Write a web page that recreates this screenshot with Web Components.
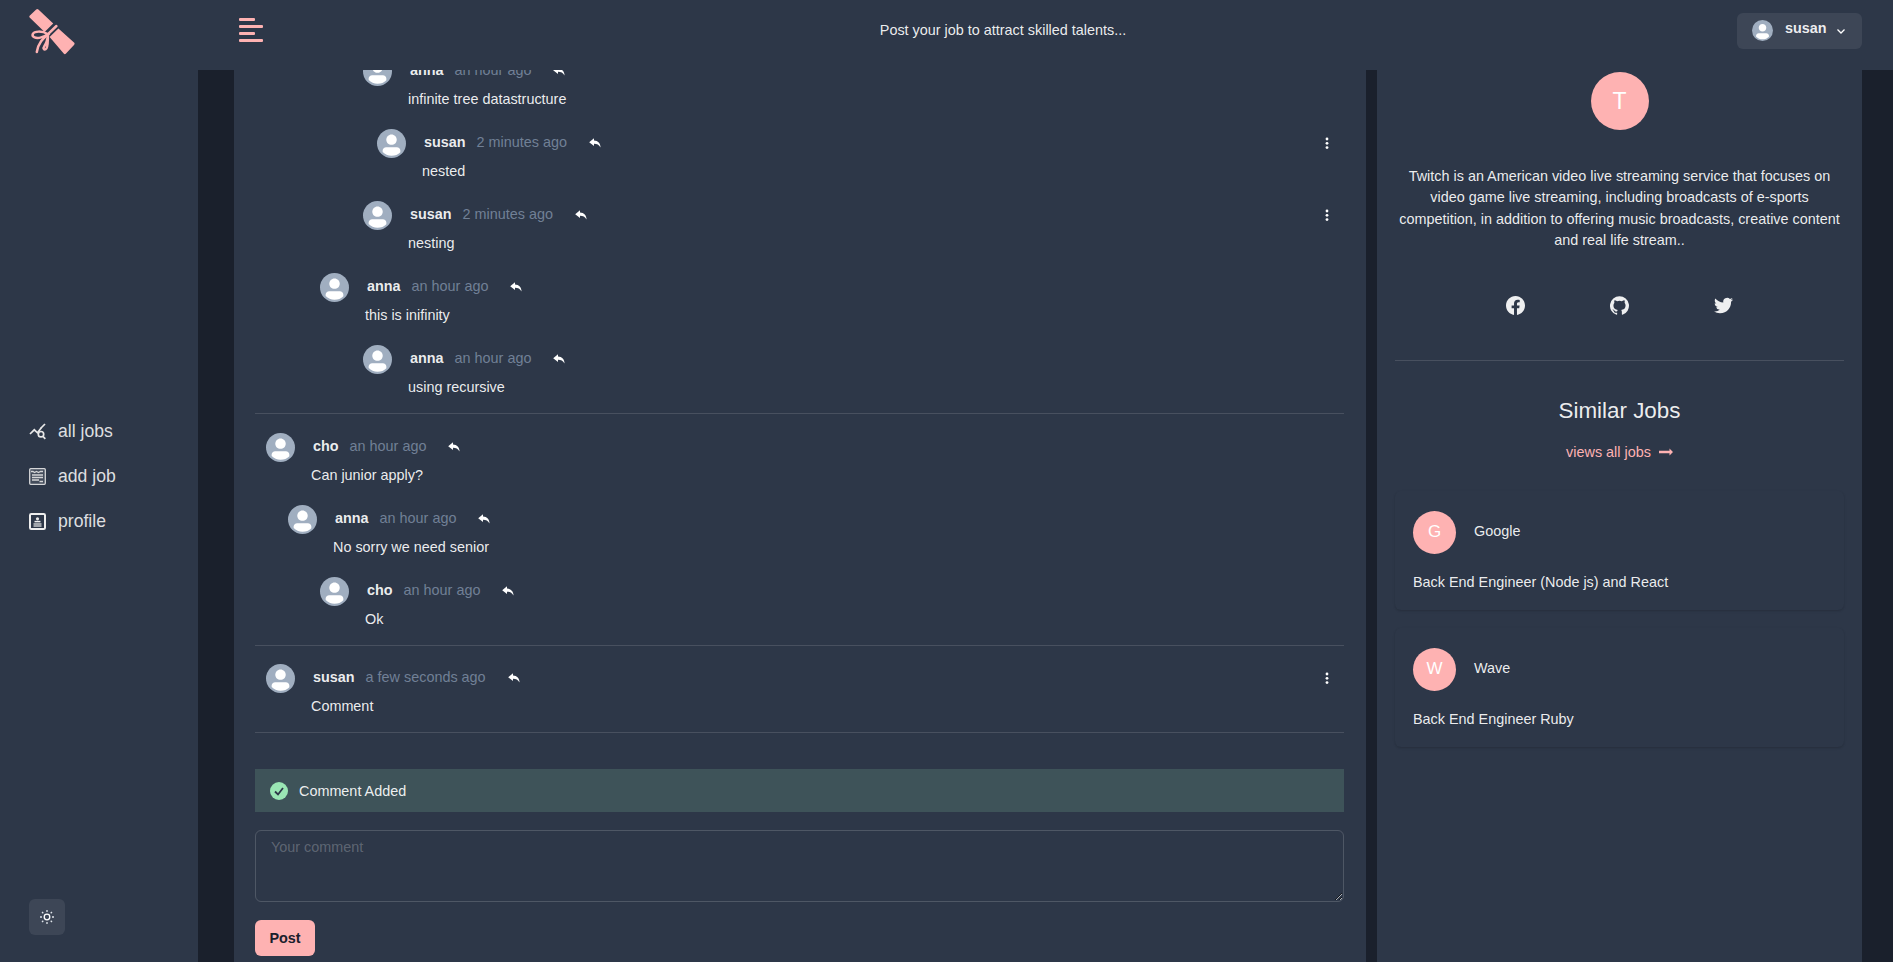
<!DOCTYPE html>
<html>
<head>
<meta charset="utf-8">
<title>Jobs</title>
<style>
  html, body { margin: 0; height: 100%; overflow: hidden; background: #1a202c; }
  body { font-family: "Liberation Sans", Arial, sans-serif; color: rgba(255,255,255,.92); }
</style>
</head>
<body>
<job-app>
  <app-header slot="header"></app-header>
  <app-sidebar slot="sidebar"></app-sidebar>
  <comment-panel slot="main">
    <comment-row name="anna" time="an hour ago" text="infinite tree datastructure" indent="97"></comment-row>
    <comment-row name="susan" time="2 minutes ago" text="nested" indent="111" menu></comment-row>
    <comment-row name="susan" time="2 minutes ago" text="nesting" indent="97" menu></comment-row>
    <comment-row name="anna" time="an hour ago" text="this is inifinity" indent="54"></comment-row>
    <comment-row name="anna" time="an hour ago" text="using recursive" indent="97" divider></comment-row>
    <comment-row name="cho" time="an hour ago" text="Can junior apply?" indent="0" top="18"></comment-row>
    <comment-row name="anna" time="an hour ago" text="No sorry we need senior" indent="22"></comment-row>
    <comment-row name="cho" time="an hour ago" text="Ok" indent="54" divider></comment-row>
    <comment-row name="susan" time="a few seconds ago" text="Comment" indent="0" top="17" menu divider></comment-row>
    <comment-form></comment-form>
  </comment-panel>
  <job-aside slot="aside">
    <job-card letter="G" company="Google" title="Back End Engineer (Node js) and React"></job-card>
    <job-card letter="W" company="Wave" title="Back End Engineer Ruby"></job-card>
  </job-aside>
</job-app>

<script>
const AVATAR = `<svg viewBox="0 0 128 128" width="100%" height="100%" style="display:block"><path fill="#fff" d="M103,102.1388 C93.094,111.92 79.3504,118 64.1638,118 C48.8056,118 34.9294,111.768 25,101.7892 L25,95.2 C25,86.8096 31.981,80 40.6,80 L87.4,80 C96.019,80 103,86.8096 103,95.2 L103,102.1388 Z"/><path fill="#fff" d="M63.9961647,24 C51.2938136,24 41,34.2938136 41,46.9961647 C41,59.7061864 51.2938136,70 63.9961647,70 C76.6985159,70 87,59.7061864 87,46.9961647 C87,34.2938136 76.6985159,24 63.9961647,24"/></svg>`;

class JobApp extends HTMLElement {
  constructor() {
    super();
    this.attachShadow({ mode: "open" });
    this.shadowRoot.innerHTML = `
      <style>
        :host { display: grid; grid-template-columns: 198px 36px 1132px 11px 485px 31px; grid-template-rows: 70px 892px; height: 962px; overflow: hidden; background: #1a202c; }
        .header { grid-column: 1 / -1; position: relative; z-index: 5; }
        .side { grid-column: 1; }
        .main { grid-column: 3; min-height: 0; overflow: hidden; }
        .aside { grid-column: 5; min-height: 0; overflow: hidden; }
      </style>
      <div class="header"><slot name="header"></slot></div>
      <div class="side"><slot name="sidebar"></slot></div>
      <div class="main"><slot name="main"></slot></div>
      <div class="aside"><slot name="aside"></slot></div>
    `;
  }
}

class AppHeader extends HTMLElement {
  constructor() {
    super();
    this.attachShadow({ mode: "open" });
    this.shadowRoot.innerHTML = `
      <style>
        :host { display: block; }
        * { box-sizing: border-box; }
        header { height: 70px; background: #2d3748; display: flex; align-items: center; padding: 0 31px 10px 0; }
        .logo { width: 239px; padding-left: 29px; display: flex; }
        .logo svg { display: block; margin-top: 4px; }
        .burger { display: flex; flex-direction: column; gap: 3.4px; width: 24px; }
        .burger i { display: block; height: 3.500px; background: #feb2b2; border-radius: 1px; width: 24px; }
        .burger i:nth-child(odd) { width: 16px; }
        .tag { flex: 1; text-align: center; font-size: 14.4px; padding-left: 6px; color: rgba(255,255,255,.92); }
        .user { width: 125px; height: 36px; margin-top: 2px; padding: 0 0 1px 15px; background: rgba(255,255,255,.08); border-radius: 6px; display: flex; align-items: center; font-size: 14.4px; font-weight: 700; }
        .av { width: 21px; height: 21px; border-radius: 50%; background: #a0aec0; overflow: hidden; flex: none; }
        .name { margin-left: 12px; margin-top: -5px; }
        .chev { margin-left: 8px; display: block; }
      </style>
      <header>
        <div class="logo">
          <svg width="46" height="46" viewBox="0 0 46 46" fill="#feb2b2">
            <path d="M9.4 .6 24.2 14.6 15.6 23 .9 8.8a1.6 1.6 0 0 1 0-2.3L7.2.6a1.6 1.6 0 0 1 2.2 0Z"/>
            <path d="M29.4 19.6 45 33.6a1.6 1.6 0 0 1 0 2.3L37 44.6a1.6 1.6 0 0 1-2.3 0L20.6 28Z"/>
            <g fill="none" stroke="#feb2b2" stroke-width="2.500" stroke-linecap="round">
              <path d="M27.4 17 19 25.2"/>
              <path d="M19 25.2C13 21.6 5.2 22 3.8 25c-1.200 3 3 5 8.400 3.400 2.800-.8 5-2 6.800-3.200Z"/>
              <path d="M18.800 25.400C14.600 29 9.200 33.400 7.800 43"/>
              <path d="M19 25.400c-.4 4.800-2 9.600-3.800 12-1.500 2-.2 3.600 1.600 2.800 2.400-1 1.800-8 2.200-14.800Z"/>
            </g>
          </svg>
        </div>
        <div class="burger"><i></i><i></i><i></i><i></i></div>
        <div class="tag">Post your job to attract skilled talents...</div>
        <div class="user">
          <div class="av">${AVATAR}</div>
          <span class="name">susan</span>
          <svg class="chev" width="12" height="12" viewBox="0 0 24 24" fill="none" stroke="#fff" stroke-width="2.600"><path d="M5 9l7 7 7-7"/></svg>
        </div>
      </header>
    `;
  }
}

class AppSidebar extends HTMLElement {
  constructor() {
    super();
    this.attachShadow({ mode: "open" });
    const s = "#e8e8e8";
    this.shadowRoot.innerHTML = `
      <style>
        :host { display: block; height: 892px; background: #2d3748; }
        * { box-sizing: border-box; }
        .wrap { height: 100%; display: flex; flex-direction: column; padding: 0 0 27px 29px; }
        nav { display: flex; flex-direction: column; gap: 25px; margin-top: 351px; font-size: 17.6px; color: rgba(255,255,255,.85); }
        a { display: flex; align-items: center; gap: 12px; height: 20px; }
        a svg { width: 17px; height: 17px; flex: none; display: block; }
        .toggle { margin-top: auto; width: 36px; height: 36px; border-radius: 6px; background: rgba(255,255,255,.08); display: flex; align-items: center; justify-content: center; }
      </style>
      <div class="wrap">
        <nav>
          <a><svg viewBox="0 0 17 17" fill="none" stroke="${s}" stroke-width="1.700"><path d="M1 11 5.300 6.800 8.500 9.800 12.500 4.500"/><path d="M12 5 16 1"/><circle cx="12" cy="11.200" r="2.700"/><path d="M14 13.400 16.300 15.800"/></svg>all jobs</a>
          <a><svg viewBox="0 0 17 17" fill="rgba(255,255,255,.12)" stroke="${s}" stroke-width="1.300" opacity=".9"><rect x=".7" y=".7" width="15.600" height="15.600" rx="1"/><path fill="none" d="M2 3.500h2l1.500 1 2-1 2 1 2-1h2.500M3 7h11M3 9.500h11" /><path fill="none" d="M3 12h7M10.500 13.500h3.500" stroke-width="1.500"/></svg>add job</a>
          <a><svg viewBox="0 0 17 17" fill="none" stroke="#eeeeee" stroke-width="2"><rect x="1" y="1" width="15" height="15" rx="1.300"/><circle cx="8.500" cy="5.800" r="1.600" fill="${s}" stroke="none"/><path d="M5.500 8.600h6" stroke-width="1.500"/><path d="M4.500 11h8M4.500 13h8" stroke-width="1.300" opacity=".8"/></svg>profile</a>
        </nav>
        <div class="toggle">
          <svg width="14" height="14" viewBox="0 0 14 14" fill="none" stroke="#fff" stroke-width="1.300"><circle cx="7" cy="7" r="2.800"/><path d="M7 0v2M7 12v2M0 7h2M12 7h2M2 2l1.300 1.300M10.700 10.700 12 12M2 12l1.300-1.300M10.700 3.300 12 2" stroke="#dfe4ea"/></svg>
        </div>
      </div>
    `;
  }
}

class CommentPanel extends HTMLElement {
  constructor() {
    super();
    this.attachShadow({ mode: "open" });
    this.shadowRoot.innerHTML = `
      <style>
        :host { display: block; height: 892px; background: #2d3748; overflow: hidden; }
        .inner { padding: 0 22px 0 21px; margin-top: -14px; }
      </style>
      <div class="inner"><slot></slot></div>
    `;
  }
}

class CommentRow extends HTMLElement {
  constructor() {
    super();
    this.attachShadow({ mode: "open" });
  }
  connectedCallback() {
    const g = (k) => this.getAttribute(k);
    const indent = Number(g("indent")) + 11;
    const menu = this.hasAttribute("menu");
    const topPad = Number(g("top") || 0);
    const h = (this.hasAttribute("divider") ? 69 : 72) + topPad;
    this.shadowRoot.innerHTML = `
      <style>
        :host { display: block; }
        * { box-sizing: border-box; }
        .box { padding: ${topPad}px 15px 0 ${indent}px; height: ${h}px; }
        .line { display: flex; align-items: center; height: 30px; }
        .av { width: 29px; height: 29px; border-radius: 50%; background: #a0aec0; overflow: hidden; flex: none; }
        .name { margin: -2px 0 0 18px; font-size: 14.4px; font-weight: 700; }
        .time { margin: -2px 0 0 11px; font-size: 14.4px; color: #718096; }
        .reply { margin-left: 22px; display: block; }
        .menu { margin-left: auto; display: block; }
        .text { font-size: 14.4px; line-height: 21.6px; margin: 3px 0 0 45px; }
        .rule { height: 1px; background: rgba(255,255,255,.13); }
      </style>
      <div class="box">
        <div class="line">
          <div class="av">${AVATAR}</div>
          <span class="name">${g("name")}</span>
          <span class="time">${g("time")}</span>
          <svg class="reply" width="12" height="10" viewBox="0 0 12 10" fill="#fff"><path d="M5 .3.2 4.200 5 8.100V5.700c3 0 5 1 6.500 3.800C11.600 5.500 9 2.800 5 2.600Z"/></svg>
          ${menu ? `<svg class="menu" width="4" height="13" viewBox="0 0 4 13" fill="#fff"><circle cx="2" cy="2" r="1.400"/><circle cx="2" cy="6.300" r="1.400"/><circle cx="2" cy="10.600" r="1.400"/></svg>` : ""}
        </div>
        <div class="text">${g("text")}</div>
      </div>
      ${this.hasAttribute("divider") ? '<div class="rule"></div>' : ""}
    `;
  }
}

class CommentForm extends HTMLElement {
  constructor() {
    super();
    this.attachShadow({ mode: "open" });
    this.shadowRoot.innerHTML = `
      <style>
        :host { display: block; padding-top: 36px; }
        * { box-sizing: border-box; }
        .alert { height: 43px; background: rgba(154,230,180,.16); display: flex; align-items: center; padding-left: 15px; gap: 11px; font-size: 14.4px; }
        .alert svg { display: block; }
        textarea { display: block; width: 100%; height: 72px; margin-top: 18px; background: transparent; border: 1px solid rgba(255,255,255,.16); border-radius: 6px; padding: 8px 15px; font: 14.4px "Liberation Sans", Arial, sans-serif; color: #fff; outline: 0; resize: vertical; }
        textarea::placeholder { color: rgba(255,255,255,.24); opacity: 1; }
        button { display: block; margin-top: 18px; width: 60px; height: 36px; border: 0; border-radius: 6px; background: #feb2b2; color: #1a202c; font: 700 14.4px "Liberation Sans", Arial, sans-serif; padding: 0; }
      </style>
      <div class="alert">
        <svg width="18" height="18" viewBox="0 0 18 18"><circle cx="9" cy="9" r="9" fill="#9ae6b4"/><path d="M5 9.500 8 12.500 13 6" fill="none" stroke="#2d3748" stroke-width="1.800"/></svg>
        <span>Comment Added</span>
      </div>
      <textarea placeholder="Your comment"></textarea>
      <button type="button">Post</button>
    `;
  }
}

class JobAside extends HTMLElement {
  constructor() {
    super();
    this.attachShadow({ mode: "open" });
    this.shadowRoot.innerHTML = `
      <style>
        :host { display: block; height: 892px; background: #2d3748; overflow: hidden; }
        * { box-sizing: border-box; }
        .wrap { padding: 2px 18px 0; }
        .logo { width: 58px; height: 58px; margin: 0 auto; border-radius: 50%; background: #feb2b2; color: #fff; display: flex; align-items: center; justify-content: center; font-size: 23px; }
        p { margin: 36px 0 0; text-align: center; font-size: 14.4px; line-height: 21.4px; }
        .social { display: flex; justify-content: center; gap: 85px; margin-top: 44px; height: 20px; align-items: center; }
        .social svg { width: 19px; height: 19px; display: block; fill: rgba(255,255,255,.92); }
        hr { border: 0; height: 1px; background: rgba(255,255,255,.13); margin: 44px 0 0; }
        h2 { margin: 35px 0 0; text-align: center; font-size: 22.4px; line-height: 29px; font-weight: 400; }
        .all { display: flex; justify-content: center; align-items: center; gap: 8px; margin-top: 16px; font-size: 14.4px; line-height: 22px; color: #feb2b2; }
        .list { display: flex; flex-direction: column; gap: 18px; margin-top: 28px; }
      </style>
      <div class="wrap">
        <div class="logo">T</div>
        <p>Twitch is an American video live streaming service that focuses on video game live streaming, including broadcasts of e-sports competition, in addition to offering music broadcasts, creative content and real life stream..</p>
        <div class="social">
          <svg viewBox="0 0 24 24"><path d="M24 12.070C24 5.400 18.630 0 12 0S0 5.400 0 12.070c0 6.030 4.390 11.020 10.130 11.930v-8.440H7.080v-3.490h3.050V9.410c0-3.020 1.790-4.690 4.530-4.690 1.310 0 2.680.23 2.680.23v2.970h-1.510c-1.490 0-1.960.93-1.960 1.880v2.270h3.330l-.53 3.490h-2.800V24C19.610 23.090 24 18.100 24 12.070z"/></svg>
          <svg viewBox="0 0 24 24"><path d="M12 .3a12 12 0 0 0-3.790 23.390c.6.110.82-.26.82-.58v-2.030c-3.340.73-4.040-1.610-4.040-1.610-.55-1.390-1.340-1.760-1.340-1.760-1.090-.75.080-.73.080-.73 1.200.08 1.840 1.240 1.840 1.240 1.070 1.830 2.810 1.300 3.500 1 .1-.78.42-1.310.76-1.610-2.670-.3-5.470-1.330-5.470-5.930 0-1.310.47-2.380 1.240-3.220-.14-.3-.54-1.520.1-3.180 0 0 1-.32 3.300 1.230a11.500 11.500 0 0 1 6 0c2.280-1.550 3.290-1.230 3.290-1.230.64 1.660.24 2.880.12 3.180a4.650 4.650 0 0 1 1.230 3.220c0 4.610-2.800 5.630-5.480 5.920.42.360.81 1.100.81 2.220v3.290c0 .32.210.69.820.57A12 12 0 0 0 12 .3z"/></svg>
          <svg viewBox="0 0 24 24"><path d="M23.950 4.570a10 10 0 0 1-2.820.77 4.960 4.960 0 0 0 2.160-2.720c-.95.550-2 .96-3.130 1.190a4.920 4.920 0 0 0-8.380 4.480C7.690 8.100 4.070 6.130 1.640 3.160a4.820 4.820 0 0 0-.67 2.480c0 1.710.87 3.210 2.190 4.100a4.900 4.900 0 0 1-2.230-.62v.06a4.920 4.920 0 0 0 3.950 4.830 5 5 0 0 1-2.210.08 4.940 4.940 0 0 0 4.600 3.420A9.870 9.870 0 0 1 0 19.540a14 14 0 0 0 7.560 2.210c9.050 0 14-7.500 14-13.980 0-.21 0-.42-.02-.63a9.940 9.940 0 0 0 2.460-2.550z"/></svg>
        </div>
        <hr>
        <h2>Similar Jobs</h2>
        <div class="all">views all jobs
          <svg width="14" height="8" viewBox="0 0 14 8" fill="#feb2b2"><path d="M0 2.800h10.500V.5L14 4l-3.500 3.500V5.200H0Z"/></svg>
        </div>
        <div class="list"><slot></slot></div>
      </div>
    `;
  }
}

class JobCard extends HTMLElement {
  constructor() {
    super();
    this.attachShadow({ mode: "open" });
  }
  connectedCallback() {
    const g = (k) => this.getAttribute(k);
    this.shadowRoot.innerHTML = `
      <style>
        :host { display: block; height: 119px; border-radius: 6px; box-shadow: 0 1px 3px rgba(0,0,0,.1), 0 1px 2px rgba(0,0,0,.06); padding: 20px 18px 0; box-sizing: border-box; font-size: 14.4px; }
        .top { display: flex; align-items: center; gap: 18px; }
        .av { width: 43px; height: 43px; border-radius: 50%; background: #feb2b2; color: #fff; display: flex; align-items: center; justify-content: center; font-size: 17px; }
        .name { margin-top: -2px; }
        .title { margin-top: 17px; line-height: 22px; }
      </style>
      <div class="top"><div class="av">${g("letter")}</div><div class="name">${g("company")}</div></div>
      <div class="title">${g("title")}</div>
    `;
  }
}

customElements.define("job-app", JobApp);
customElements.define("app-header", AppHeader);
customElements.define("app-sidebar", AppSidebar);
customElements.define("comment-panel", CommentPanel);
customElements.define("comment-row", CommentRow);
customElements.define("comment-form", CommentForm);
customElements.define("job-aside", JobAside);
customElements.define("job-card", JobCard);
</script>
</body>
</html>
